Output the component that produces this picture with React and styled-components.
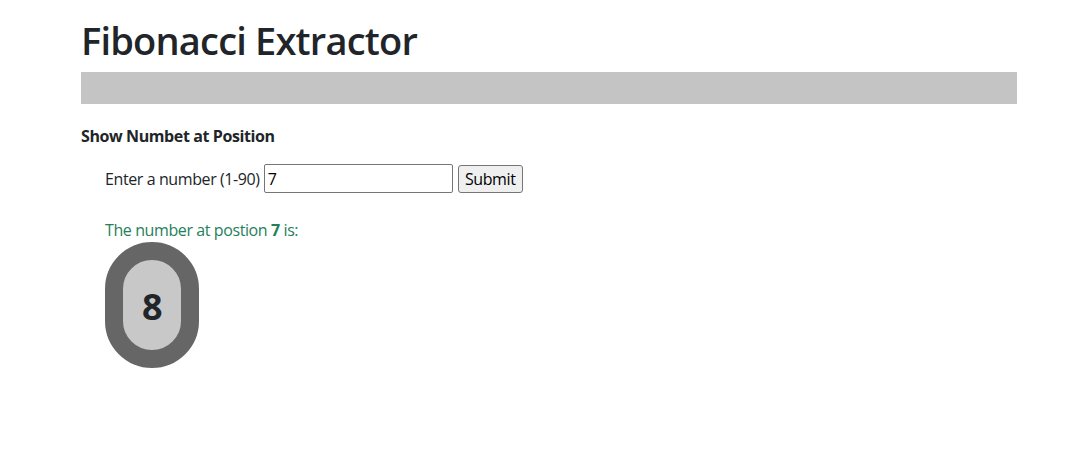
import React, { useState } from 'react';
import styled, { createGlobalStyle } from 'styled-components';

const GlobalStyle = createGlobalStyle`
  body {
    margin: 0;
    background: #fff;
    color: #212529;
    font-family: 'Open Sans', 'Noto Sans', sans-serif;
    font-size: 16px;
    line-height: 1.5;
    letter-spacing: -0.4px;
  }
`;

const Page = styled.div`
  width: 936px;
  margin-left: 81px;
  padding-top: 16px;
`;

const Title = styled.h1`
  margin: 0 0 8px;
  font-size: 38px;
  font-weight: 600;
  line-height: 48px;
  letter-spacing: -0.8px;
`;

const Bar = styled.div`
  height: 32px;
  background: #c4c4c4;
`;

const Section = styled.section`
  padding-top: 20px;
`;

const SectionTitle = styled.h6`
  margin: 0;
  font-size: 16px;
  font-weight: 700;
  line-height: 24px;
`;

const Body = styled.div`
  padding-left: 24px;
`;

const Form = styled.form`
  display: flex;
  align-items: center;
  margin-top: 16px;
  height: 29px;
`;

const Label = styled.label`
  margin-right: 4px;
`;

const NumberInput = styled.input`
  box-sizing: border-box;
  width: 189px;
  height: 29px;
  padding: 1px 3px;
  border: 1px solid #767676;
  border-radius: 2px;
  font: inherit;
  letter-spacing: inherit;
  color: #000;
`;

const SubmitButton = styled.button`
  box-sizing: border-box;
  margin-left: 5px;
  width: 65px;
  height: 28px;
  padding: 0 6px;
  border: 1px solid #767676;
  border-radius: 3px;
  background: #efefef;
  font: inherit;
  letter-spacing: inherit;
  color: #000;
  cursor: pointer;
`;

const ResultText = styled.p`
  margin: 25px 0 0;
  color: #25805a;
`;

const Oval = styled.div`
  box-sizing: border-box;
  width: 94px;
  height: 126px;
  border: 18px solid #666;
  border-radius: 50px;
  background: #c8c8c8;
  display: flex;
  align-items: center;
  justify-content: center;
  padding-top: 3px;
`;

const Value = styled.span`
  font-size: 36px;
  font-weight: 700;
  line-height: 1;
  color: #212529;
`;

const fibAt = (n) => {
  let a = 0;
  let b = 1;
  for (let i = 1; i < n; i++) {
    [a, b] = [b, a + b];
  }
  return a;
};

const App = () => {
  const [input, setInput] = useState('7');
  const [position, setPosition] = useState(7);

  const handleSubmit = (e) => {
    e.preventDefault();
    const n = parseInt(input, 10);
    if (n >= 1 && n <= 90) setPosition(n);
  };

  return (
    <>
      <GlobalStyle />
      <Page>
        <Title>Fibonacci Extractor</Title>
        <Bar />
        <Section>
          <SectionTitle>Show Numbet at Position</SectionTitle>
          <Body>
            <Form onSubmit={handleSubmit}>
              <Label htmlFor="pos">Enter a number (1-90)</Label>
              <NumberInput
                id="pos"
                type="text"
                value={input}
                onChange={(e) => setInput(e.target.value)}
              />
              <SubmitButton type="submit">Submit</SubmitButton>
            </Form>
            <ResultText>
              The number at postion <b>{position}</b> is:
            </ResultText>
            <Oval>
              <Value>{fibAt(position)}</Value>
            </Oval>
          </Body>
        </Section>
      </Page>
    </>
  );
};

export default App;
